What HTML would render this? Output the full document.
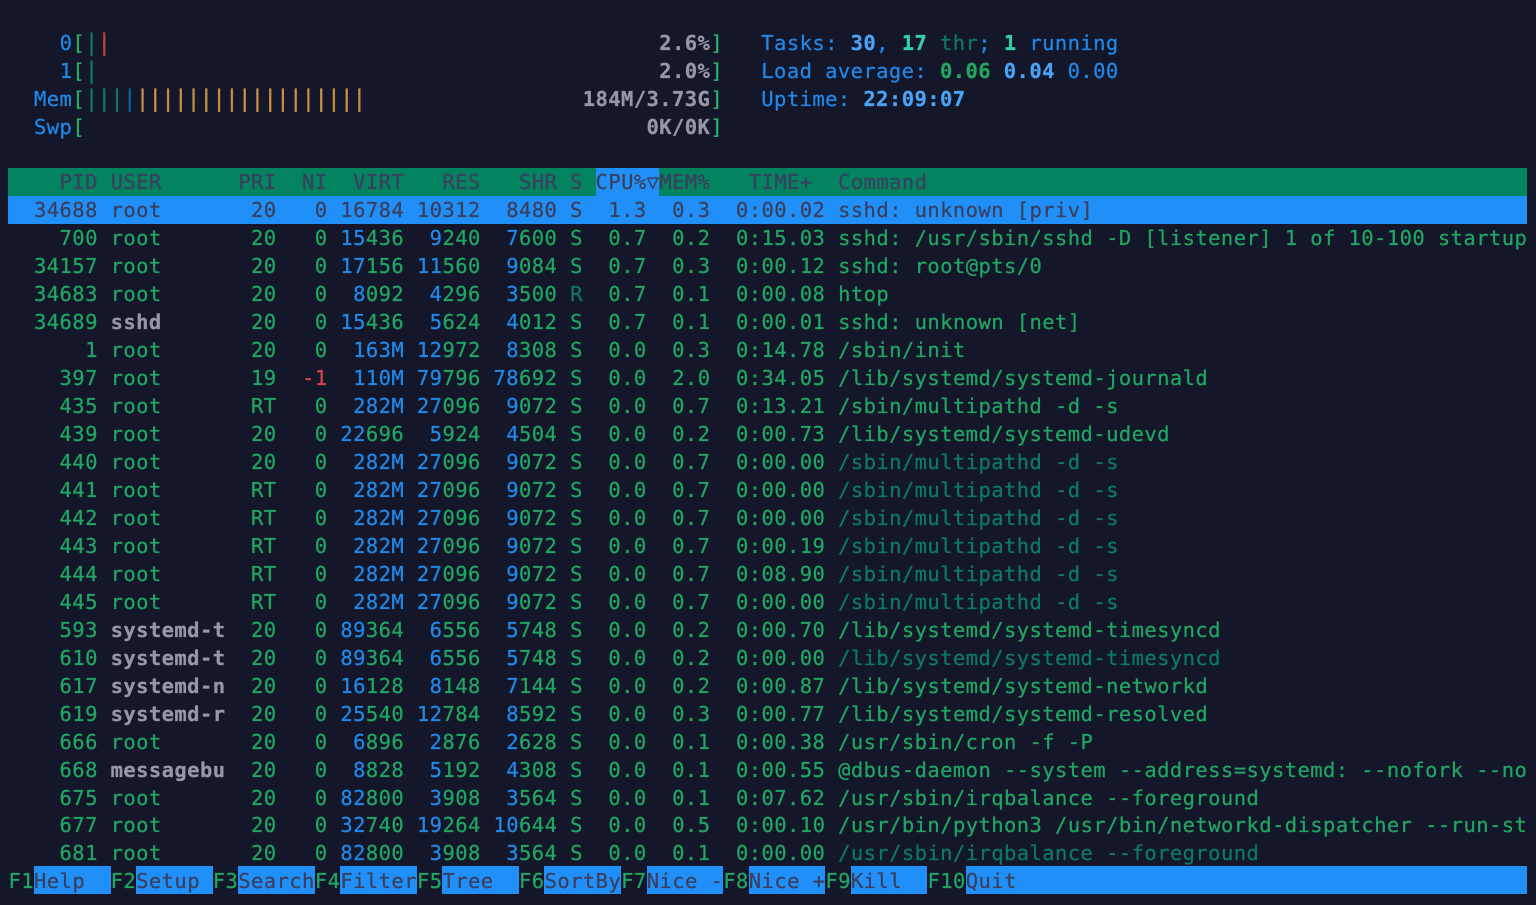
<!DOCTYPE html>
<html><head><meta charset="utf-8"><title>htop</title>
<style>
html,body{margin:0;padding:0;width:1536px;height:905px;overflow:hidden;background:#141729}
body{position:relative;font-family:"DejaVu Sans Mono","Liberation Mono",monospace;font-size:20.5px;letter-spacing:.42px;color:#20a563;-webkit-text-stroke:.25px}
.a{position:absolute;line-height:28px}
.r{height:28px;white-space:pre}
b{font-weight:400;color:#2188e8}
u{text-decoration:none;color:#0c7a62}
i{font-style:normal;font-weight:700;color:#9696a6}
em{font-style:normal;font-weight:700;color:#4aa3f4}
s{text-decoration:none;font-weight:700;color:#36d0a6}
strong{color:#20a563;font-weight:700}
.g{color:#22b368}
.m{font-size:23px;letter-spacing:-1.09px;line-height:0;position:relative;left:-.5px;-webkit-text-stroke:.3px}
.bar{position:absolute;left:8px;width:1519px}
.k{position:absolute;top:866px;height:28px;background:#2090f8}
.d{color:#3a3f5e}
.d b,.d u{color:#3a3f5e}
</style></head>
<body>
<div class="a" style="left:8.5px;top:28.6px"><div class="r">    <b>0</b><span class="g">[</span><span class="m"><u>|</u><span style="color:#c8383c">|</span></span></div><div class="r">    <b>1</b><span class="g">[</span><span class="m"><u>|</u></span></div><div class="r">  <b>Mem</b><span class="g">[</span><span class="m"><u>|||</u><span style="color:#0f5f95">|</span><span style="color:#c98f45">||||||||||||||||||</span></span></div><div class="r">  <b>Swp</b><span class="g">[</span></div></div>
<div class="a" style="left:582.7px;top:28.6px"><div class="r">      <i>2.6%</i><span class="g">]</span></div><div class="r">      <i>2.0%</i><span class="g">]</span></div><div class="r"><i>184M/3.73G</i><span class="g">]</span></div><div class="r">     <i>0K/0K</i><span class="g">]</span></div></div>
<div class="a" style="left:761.3px;top:28.6px"><div class="r"><b>Tasks: </b><em>30</em><b>, </b><s>17</s><u> thr</u><b>; </b><s>1</s><b> running</b></div><div class="r"><b>Load average: </b><strong>0.06</strong> <em>0.04</em> <b>0.00</b></div><div class="r"><b>Uptime: </b><em>22:09:07</em></div></div>

<div class="bar" style="top:168px;height:28px;background:#03835f"></div>
<div class="bar" style="top:168px;height:28px;left:595.6px;width:63.8px;background:#2090f8"></div>
<div class="bar" style="top:196px;height:27.5px;background:#2090f8"></div>
<div class="k" style="left:34px;width:76.6px"></div>
<div class="k" style="left:136.1px;width:76.6px"></div>
<div class="k" style="left:238.2px;width:76.6px"></div>
<div class="k" style="left:340.3px;width:76.6px"></div>
<div class="k" style="left:442.3px;width:76.6px"></div>
<div class="k" style="left:544.4px;width:76.6px"></div>
<div class="k" style="left:646.5px;width:76.6px"></div>
<div class="k" style="left:748.6px;width:76.6px"></div>
<div class="k" style="left:850.7px;width:76.6px"></div>
<div class="k" style="left:965.5px;width:561.5px"></div>

<div class="a" style="left:8.5px;top:168.2px">
<div class="r d">    PID USER      PRI  NI  VIRT   RES   SHR S CPU%▽MEM%   TIME+  Command</div>
<div class="r d">  34688 root       20   0 16784 10312  8480 S  1.3  0.3  0:00.02 sshd: unknown [priv]</div>
<div class="r">    700 root       20   0 <b>15</b>436  <b>9</b>240  <b>7</b>600 S  0.7  0.2  0:15.03 sshd: /usr/sbin/sshd -D [listener] 1 of 10-100 startup</div>
<div class="r">  34157 root       20   0 <b>17</b>156 <b>11</b>560  <b>9</b>084 S  0.7  0.3  0:00.12 sshd: root@pts/0</div>
<div class="r">  34683 root       20   0  <b>8</b>092  <b>4</b>296  <b>3</b>500 <u>R</u>  0.7  0.1  0:00.08 htop</div>
<div class="r">  34689 <i>sshd</i>       20   0 <b>15</b>436  <b>5</b>624  <b>4</b>012 S  0.7  0.1  0:00.01 sshd: unknown [net]</div>
<div class="r">      1 root       20   0  <b>163M</b> <b>12</b>972  <b>8</b>308 S  0.0  0.3  0:14.78 /sbin/init</div>
<div class="r">    397 root       19  <span style="color:#d8434a">-1</span>  <b>110M</b> <b>79</b>796 <b>78</b>692 S  0.0  2.0  0:34.05 /lib/systemd/systemd-journald</div>
<div class="r">    435 root       RT   0  <b>282M</b> <b>27</b>096  <b>9</b>072 S  0.0  0.7  0:13.21 /sbin/multipathd -d -s</div>
<div class="r">    439 root       20   0 <b>22</b>696  <b>5</b>924  <b>4</b>504 S  0.0  0.2  0:00.73 /lib/systemd/systemd-udevd</div>
<div class="r">    440 root       20   0  <b>282M</b> <b>27</b>096  <b>9</b>072 S  0.0  0.7  0:00.00 <u>/sbin/multipathd -d -s</u></div>
<div class="r">    441 root       RT   0  <b>282M</b> <b>27</b>096  <b>9</b>072 S  0.0  0.7  0:00.00 <u>/sbin/multipathd -d -s</u></div>
<div class="r">    442 root       RT   0  <b>282M</b> <b>27</b>096  <b>9</b>072 S  0.0  0.7  0:00.00 <u>/sbin/multipathd -d -s</u></div>
<div class="r">    443 root       RT   0  <b>282M</b> <b>27</b>096  <b>9</b>072 S  0.0  0.7  0:00.19 <u>/sbin/multipathd -d -s</u></div>
<div class="r">    444 root       RT   0  <b>282M</b> <b>27</b>096  <b>9</b>072 S  0.0  0.7  0:08.90 <u>/sbin/multipathd -d -s</u></div>
<div class="r">    445 root       RT   0  <b>282M</b> <b>27</b>096  <b>9</b>072 S  0.0  0.7  0:00.00 <u>/sbin/multipathd -d -s</u></div>
<div class="r">    593 <i>systemd-t</i>  20   0 <b>89</b>364  <b>6</b>556  <b>5</b>748 S  0.0  0.2  0:00.70 /lib/systemd/systemd-timesyncd</div>
<div class="r">    610 <i>systemd-t</i>  20   0 <b>89</b>364  <b>6</b>556  <b>5</b>748 S  0.0  0.2  0:00.00 <u>/lib/systemd/systemd-timesyncd</u></div>
<div class="r">    617 <i>systemd-n</i>  20   0 <b>16</b>128  <b>8</b>148  <b>7</b>144 S  0.0  0.2  0:00.87 /lib/systemd/systemd-networkd</div>
<div class="r">    619 <i>systemd-r</i>  20   0 <b>25</b>540 <b>12</b>784  <b>8</b>592 S  0.0  0.3  0:00.77 /lib/systemd/systemd-resolved</div>
<div class="r">    666 root       20   0  <b>6</b>896  <b>2</b>876  <b>2</b>628 S  0.0  0.1  0:00.38 /usr/sbin/cron -f -P</div>
<div class="r">    668 <i>messagebu</i>  20   0  <b>8</b>828  <b>5</b>192  <b>4</b>308 S  0.0  0.1  0:00.55 @dbus-daemon --system --address=systemd: --nofork --no</div>
<div class="r">    675 root       20   0 <b>82</b>800  <b>3</b>908  <b>3</b>564 S  0.0  0.1  0:07.62 /usr/sbin/irqbalance --foreground</div>
<div class="r" style="margin-top:-1px">    677 root       20   0 <b>32</b>740 <b>19</b>264 <b>10</b>644 S  0.0  0.5  0:00.10 /usr/bin/python3 /usr/bin/networkd-dispatcher --run-st</div>
<div class="r">    681 root       20   0 <b>82</b>800  <b>3</b>908  <b>3</b>564 S  0.0  0.1  0:00.00 <u>/usr/sbin/irqbalance --foreground</u></div>
<div class="r">F1<span class="d">Help  </span>F2<span class="d">Setup </span>F3<span class="d">Search</span>F4<span class="d">Filter</span>F5<span class="d">Tree  </span>F6<span class="d">SortBy</span>F7<span class="d">Nice -</span>F8<span class="d">Nice +</span>F9<span class="d">Kill  </span>F10<span class="d">Quit</span></div>
</div>
</body></html>
